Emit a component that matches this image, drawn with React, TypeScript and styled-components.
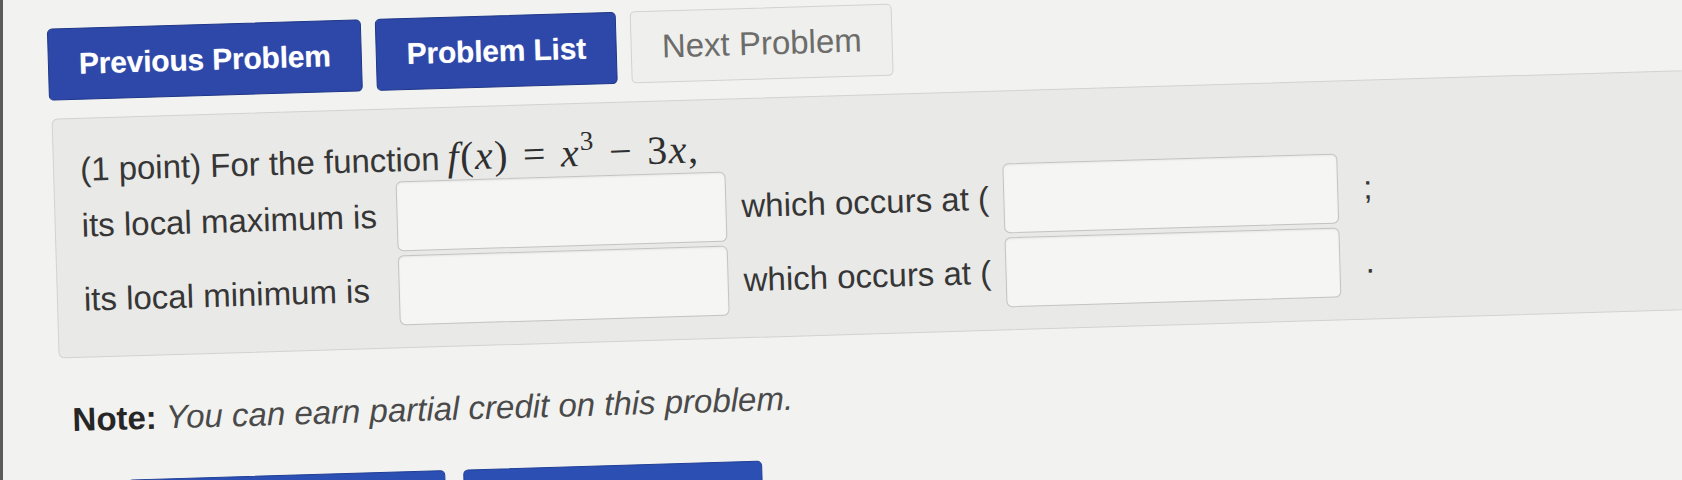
import styled, { createGlobalStyle } from 'styled-components';

const GlobalStyle = createGlobalStyle`
  html, body {
    margin: 0;
    padding: 0;
    background: #f2f2f0;
    overflow: hidden;
  }
  body {
    font-family: "Liberation Sans", Arial, sans-serif;
  }
`;

// the photo is a little tilted, so the whole page is turned a touch
const Screen = styled.div`
  width: 1682px;
  height: 480px;
  overflow: hidden;
  background: #f2f2f0;
  border-left: 3px solid #5b5b57;
  box-sizing: border-box;
`;

const Page = styled.main`
  width: 1780px;
  padding: 30px 0 0 43px;
  box-sizing: border-box;
  transform: rotate(-1.7deg);
  transform-origin: 0 0;
`;

const Nav = styled.nav`
  display: flex;
  gap: 14px;
`;

const NavButton = styled.button<{ $variant?: 'primary' | 'disabled' }>`
  height: 72px;
  padding: 0 30px;
  border-radius: 5px;
  font-family: "Liberation Sans", Arial, sans-serif;
  cursor: pointer;
  white-space: nowrap;
  ${({ $variant }) =>
    $variant === 'disabled'
      ? `
    background: #efefed;
    color: #6c6c6a;
    border: 1px solid #d2d2d0;
    font-size: 33px;
    font-weight: 400;
  `
      : `
    background: #2d48a9;
    color: #ffffff;
    border: 1px solid #1f3688;
    font-size: 30px;
    font-weight: 700;
    letter-spacing: -0.2px;
    text-shadow: 0 0 1px rgba(255, 255, 255, 0.4);
  `}
`;

const Panel = styled.section`
  margin: 18px 0 0 2px;
  padding: 29px 0 22px 26px;
  background: #e9e9e7;
  border: 1px solid #d2d2d0;
  border-radius: 6px;
  color: #363636;
`;

const Intro = styled.div`
  font-size: 33px;
  line-height: 40px;
  white-space: nowrap;
`;

const MathText = styled.span`
  font-family: "Liberation Serif", "Times New Roman", serif;
  font-size: 40px;
  line-height: 1;
  margin-left: 8px;
  letter-spacing: 1.5px;
  color: #2f2f2f;
`;

const Var = styled.i`
  font-style: italic;
`;

const Op = styled.span`
  margin: 0 14px;
`;

const Sup = styled.sup`
  font-size: 27px;
  vertical-align: 16px;
  line-height: 0;
`;

const AnswerGrid = styled.div`
  display: grid;
  grid-template-columns: 315px 330px 277px 335px auto;
  grid-auto-rows: 70px;
  row-gap: 4px;
  margin-top: 1px;
  align-items: center;
`;

const Label = styled.span<{ $indent?: number }>`
  font-size: 33px;
  line-height: 40px;
  white-space: nowrap;
  padding-left: ${({ $indent }) => $indent ?? 0}px;
`;

const AnswerInput = styled.input`
  width: 100%;
  height: 70px;
  box-sizing: border-box;
  background: #f5f5f3;
  border: 1px solid #c3c3c1;
  border-radius: 6px;
  box-shadow: inset 0 1px 2px rgba(0, 0, 0, 0.06);
  font-size: 30px;
  padding: 0 12px;
`;

const Note = styled.p`
  margin: 42px 0 0 14px;
  font-size: 33px;
  line-height: 40px;
  color: #4a4a4a;
  white-space: nowrap;
  strong {
    color: #262626;
  }
`;

const Actions = styled.div`
  display: flex;
  gap: 18px;
  margin: 41px 0 0 67px;
`;

// only the top edge of these shows at the bottom of the photo
const ActionButton = styled.button<{ $width: number }>`
  width: ${({ $width }) => $width}px;
  height: 72px;
  background: #2c4fb3;
  border: 1px solid #213f96;
  border-radius: 5px;
`;

const rows = [
  { label: 'its local maximum is', end: ';' },
  { label: 'its local minimum is', end: '.' },
];

export default function App() {
  return (
    <>
      <GlobalStyle />
      <Screen>
        <Page>
          <Nav>
            <NavButton $variant="primary">Previous Problem</NavButton>
            <NavButton $variant="primary">Problem List</NavButton>
            <NavButton $variant="disabled">Next Problem</NavButton>
          </Nav>

          <Panel>
            <Intro>
              (1 point) For the function
              <MathText>
                <Var>f</Var>(<Var>x</Var>)<Op>=</Op>
                <Var>x</Var>
                <Sup>3</Sup>
                <Op>−</Op>3<Var>x</Var>,
              </MathText>
            </Intro>
            <AnswerGrid>
              {rows.map((row) => (
                <>
                  <Label key={row.label}>{row.label}</Label>
                  <AnswerInput type="text" aria-label={row.label} />
                  <Label $indent={15}>which occurs at (</Label>
                  <AnswerInput type="text" aria-label="which occurs at" />
                  <Label $indent={25}>{row.end}</Label>
                </>
              ))}
            </AnswerGrid>
          </Panel>

          <Note>
            <strong>Note:</strong> <em>You can earn partial credit on this problem.</em>
          </Note>

          <Actions>
            <ActionButton $width={318} aria-label="Submit Answers" />
            <ActionButton $width={299} aria-label="Preview My Answers" />
          </Actions>
        </Page>
      </Screen>
    </>
  );
}
